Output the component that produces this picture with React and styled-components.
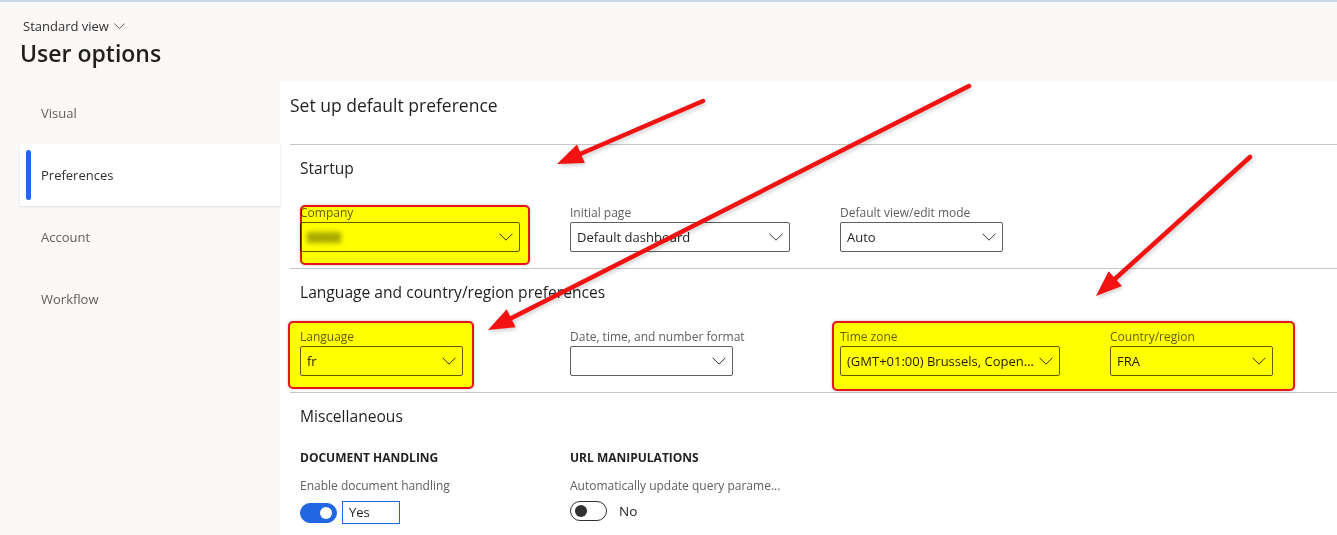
import styled, { createGlobalStyle } from "styled-components";

const GlobalStyle = createGlobalStyle`
    html, body {
        margin: 0;
        padding: 0;
        background: #faf9f8;
        font-family: "Segoe UI", "Open Sans", "Noto Sans", sans-serif;
        color: #323130;
    }
    * { box-sizing: border-box; }
`

const Chevron = ({ size = 14 }) => (
    <svg width={size} height={size * 0.6} viewBox="0 0 14 8" fill="none">
        <path d="M0.5 0.5 L7 7 L13.5 0.5" stroke="#323130" strokeWidth="1" />
    </svg>
)

// arrow from tail to tip with a filled head
const Arrow = ({ from, to }) =>
{
    const dx = to[0] - from[0];
    const dy = to[1] - from[1];
    const len = Math.hypot(dx, dy);
    const ux = dx / len, uy = dy / len;
    const headLen = 26, half = 10;
    const bx = to[0] - ux * headLen, by = to[1] - uy * headLen;
    const p1 = [bx - uy * half, by + ux * half];
    const p2 = [bx + uy * half, by - ux * half];
    return (
        <g>
            <line x1={from[0]} y1={from[1]} x2={bx + ux * 4} y2={by + uy * 4} stroke="#f31212" strokeWidth="4.5" strokeLinecap="round" />
            <polygon points={`${to[0]},${to[1]} ${p1[0]},${p1[1]} ${p2[0]},${p2[1]}`} fill="#f31212" />
        </g>
    )
}

const Select = ({ value, width = 220, blurred }) => (
    <SelectBox $width={width}>
        {blurred ? <Blur /> : <span>{value}</span>}
        <Chevron />
    </SelectBox>
)

const Field = ({ label, children }) => (
    <FieldWrap>
        <Label>{label}</Label>
        {children}
    </FieldWrap>
)

const navItems = ["Visual", "Preferences", "Account", "Workflow"];

const App = () =>
{
    return (
    <>
        <GlobalStyle />
        <Page>
            <Header>
                <ViewSwitch>Standard view <Chevron size={11} /></ViewSwitch>
                <Title>User options</Title>
            </Header>
            <Body>
                <Nav>
                    {navItems.map((item) => (
                        <NavItem key={item} $active={item === "Preferences"}>{item}</NavItem>
                    ))}
                </Nav>
                <Main>
                    <MainTitle>Set up default preference</MainTitle>
                    <Section>
                        <SectionTitle>Startup</SectionTitle>
                        <Fields>
                            <Field label="Company"><Select blurred /></Field>
                            <Field label="Initial page"><Select value="Default dashboard" /></Field>
                            <Field label="Default view/edit mode"><Select value="Auto" width={163} /></Field>
                        </Fields>
                    </Section>
                    <Section>
                        <SectionTitle>Language and country/region preferences</SectionTitle>
                        <Fields>
                            <Field label="Language"><Select value="fr" width={163} /></Field>
                            <Field label="Date, time, and number format"><Select value="" width={163} /></Field>
                            <Field label="Time zone"><Select value="(GMT+01:00) Brussels, Copen..." /></Field>
                            <Field label="Country/region"><Select value="FRA" width={163} /></Field>
                        </Fields>
                    </Section>
                    <Section $last>
                        <SectionTitle>Miscellaneous</SectionTitle>
                        <Fields $misc>
                            <FieldWrap>
                                <GroupTitle>DOCUMENT HANDLING</GroupTitle>
                                <Label $gap>Enable document handling</Label>
                                <ToggleRow>
                                    <Toggle $on><Knob $on /></Toggle>
                                    <YesBox>Yes</YesBox>
                                </ToggleRow>
                            </FieldWrap>
                            <FieldWrap>
                                <GroupTitle>URL MANIPULATIONS</GroupTitle>
                                <Label $gap>Automatically update query parame...</Label>
                                <ToggleRow>
                                    <Toggle><Knob /></Toggle>
                                    <ToggleText>No</ToggleText>
                                </ToggleRow>
                            </FieldWrap>
                        </Fields>
                    </Section>
                </Main>
            </Body>

            <Highlight style={{ left: 300, top: 203, width: 230, height: 60 }} />
            <Highlight style={{ left: 288, top: 319, width: 186, height: 68 }} />
            <Highlight style={{ left: 832, top: 319, width: 463, height: 70 }} />
            <Arrows width="1337" height="535" viewBox="0 0 1337 535">
                <Arrow from={[703, 99]} to={[557, 162]} />
                <Arrow from={[969, 84]} to={[488, 328]} />
                <Arrow from={[1250, 155]} to={[1096, 294]} />
            </Arrows>
        </Page>
    </>)
}

const Page = styled.div`
    position: relative;
    width: 1337px;
    height: 535px;
    overflow: hidden;
    border-top: 2px solid #c9d8ec;
    display: flex;
    flex-direction: column;
`

const Header = styled.header`
    flex: none;
    padding: 14px 20px 0 20px;
    height: 79px;
`

const ViewSwitch = styled.div`
    display: flex;
    align-items: center;
    gap: 5px;
    padding-left: 3px;
    font-size: 13px;
    line-height: 20px;
    color: #323130;
`

const Title = styled.h1`
    margin: 2px 0 0 0;
    font-size: 23px;
    font-weight: 600;
    line-height: 30px;
    color: #201f1e;
`

const Body = styled.div`
    flex: 1;
    display: flex;
    min-height: 0;
`

const Nav = styled.nav`
    flex: none;
    width: 280px;
    padding: 1px 0 0 20px;
    display: flex;
    flex-direction: column;
`

const NavItem = styled.div`
    position: relative;
    height: 62px;
    display: flex;
    align-items: center;
    padding-left: 21px;
    font-size: 13px;
    color: ${(p) => (p.$active ? "#323130" : "#605e5c")};
    background: ${(p) => (p.$active ? "#ffffff" : "transparent")};
    box-shadow: ${(p) => (p.$active ? "0 1px 2px rgba(0,0,0,0.12)" : "none")};

    &::before {
        content: "";
        display: ${(p) => (p.$active ? "block" : "none")};
        position: absolute;
        left: 6px;
        top: 6px;
        bottom: 6px;
        width: 5px;
        border-radius: 3px;
        background: #2266e3;
    }
`

const Main = styled.main`
    flex: 1;
    min-width: 0;
    background: #ffffff;
    padding-left: 10px;
`

const MainTitle = styled.h2`
    margin: 0;
    height: 63px;
    padding-top: 12px;
    font-size: 17.5px;
    line-height: 24px;
    font-weight: 400;
    color: #201f1e;
`

const Section = styled.section`
    border-top: 1px solid #c8c6c4;
    padding: 11px 0 16px 10px;
    height: ${(p) => (p.$last ? "auto" : "124px")};
`

const SectionTitle = styled.h3`
    margin: 0;
    font-size: 15.6px;
    line-height: 24px;
    font-weight: 400;
    color: #201f1e;
`

const Fields = styled.div`
    display: grid;
    grid-template-columns: repeat(4, 270px);
    margin-top: ${(p) => (p.$misc ? "22px" : "25px")};
`

const FieldWrap = styled.div`
    display: flex;
    flex-direction: column;
`

const Label = styled.label`
    font-size: 12px;
    line-height: 16px;
    color: #605e5c;
    margin-top: ${(p) => (p.$gap ? "12px" : "0")};
    margin-bottom: 1px;
    white-space: nowrap;
`

const GroupTitle = styled.div`
    font-size: 12px;
    line-height: 16px;
    font-weight: 700;
    color: #201f1e;
`

const SelectBox = styled.div`
    width: ${(p) => p.$width}px;
    height: 30px;
    border: 1px solid #605e5c;
    border-radius: 2px;
    display: flex;
    align-items: center;
    justify-content: space-between;
    padding: 0 6px 0 6px;
    font-size: 13px;
    color: #201f1e;
    white-space: nowrap;
    overflow: hidden;
`

const Blur = styled.span`
    width: 34px;
    height: 11px;
    background: #a8a890;
    filter: blur(2.5px);
`

const ToggleRow = styled.div`
    display: flex;
    align-items: center;
    gap: 5px;
    margin-top: 6px;
`

const Toggle = styled.div`
    width: 37px;
    height: 20px;
    border-radius: 10px;
    display: flex;
    align-items: center;
    justify-content: ${(p) => (p.$on ? "flex-end" : "flex-start")};
    padding: 0 4px;
    background: ${(p) => (p.$on ? "#2266e3" : "#ffffff")};
    border: 1px solid ${(p) => (p.$on ? "#2266e3" : "#323130")};
`

const Knob = styled.div`
    width: 12px;
    height: 12px;
    border-radius: 50%;
    background: ${(p) => (p.$on ? "#ffffff" : "#323130")};
`

const YesBox = styled.div`
    width: 58px;
    height: 23px;
    border: 1px solid #2266e3;
    padding: 1px 6px;
    font-size: 13px;
    color: #201f1e;
`

const ToggleText = styled.span`
    margin-left: 7px;
    font-size: 13.5px;
    color: #201f1e;
`

const Highlight = styled.div`
    position: absolute;
    background: #ffff00;
    mix-blend-mode: multiply;
    border: 2px solid #e8141c;
    border-radius: 5px;
    box-shadow: 0 0 3px rgba(0, 0, 0, 0.25);
    pointer-events: none;
`

const Arrows = styled.svg`
    position: absolute;
    left: 0;
    top: 0;
    pointer-events: none;
    filter: drop-shadow(1px 2px 2px rgba(0, 0, 0, 0.2));
`

export default App;
